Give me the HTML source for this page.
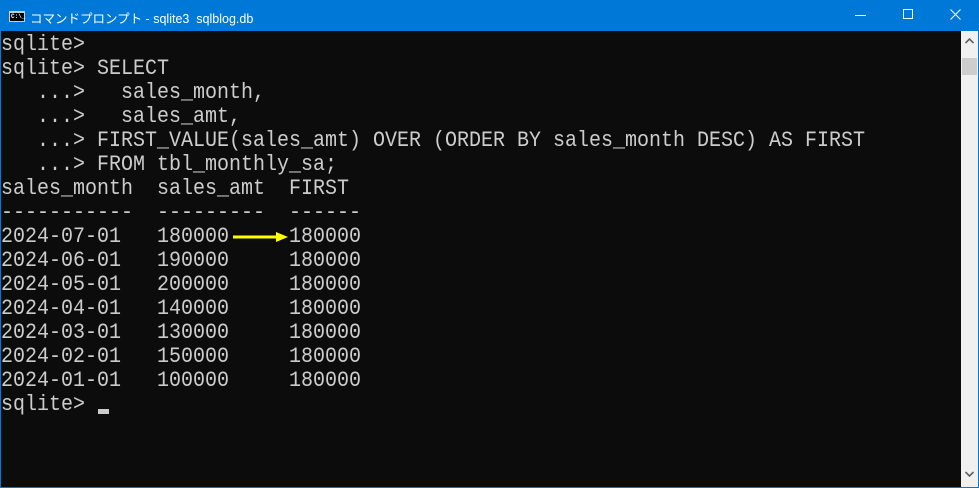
<!DOCTYPE html>
<html><head><meta charset="utf-8"><style>
*{margin:0;padding:0;box-sizing:border-box}
body{width:979px;height:488px;background:#0078d7;position:relative;overflow:hidden;font-family:"Liberation Sans","Noto Sans CJK JP",sans-serif}
#title{position:absolute;left:0;top:0;width:979px;height:31px;background:#0078d7;color:#fff;font-size:12.5px}
#title .t{position:absolute;left:30px;top:8px;white-space:pre}
#icon{position:absolute;left:9px;top:11px;width:16px;height:11px;background:#000;border:1px solid #ccc;border-top-width:2px}
#icon span{position:absolute;left:1px;top:0px;font:bold 6px "Liberation Mono",monospace;color:#fff}
#con{position:absolute;left:1px;top:31px;width:960px;height:456px;background:#0c0c0c}
#sb{position:absolute;left:961px;top:31px;width:17px;height:456px;background:#f0f0f0}
#thumb{position:absolute;left:1px;top:27px;width:15px;height:17px;background:#cdcdcd}
pre{position:absolute;left:1px;top:33px;font:22px/24px "Liberation Mono",monospace;color:#cccccc;transform:scaleX(0.909);transform-origin:0 0}
#cur{position:absolute;left:98px;top:409px;width:11px;height:5px;background:#ccc}
</style></head><body>
<div id="title"><div id="icon"><span>C:\_</span></div><div class="t">コマンドプロンプト - sqlite3  sqlblog.db</div>
<svg style="position:absolute;left:855px;top:8px" width="16" height="16"><path d="M0 7.5H11" stroke="#fff"/></svg>
<svg style="position:absolute;left:903px;top:9px" width="12" height="12"><rect x="0.5" y="0.5" width="9" height="9" fill="none" stroke="#fff"/></svg>
<svg style="position:absolute;left:950px;top:9px" width="12" height="12"><path d="M0.5 0.5L10.5 10.5M10.5 0.5L0.5 10.5" stroke="#fff"/></svg>
</div>
<div id="con"></div>
<div id="sb"><div id="thumb"></div>
<svg style="position:absolute;left:4px;top:7px" width="9" height="6"><path d="M0.5 5L4.5 1L8.5 5" stroke="#606060" stroke-width="1.6" fill="none"/></svg>
<svg style="position:absolute;left:4px;top:440px" width="9" height="6"><path d="M0.5 1L4.5 5L8.5 1" stroke="#606060" stroke-width="1.6" fill="none"/></svg>
</div>
<pre>sqlite>
sqlite> SELECT
   ...>   sales_month,
   ...>   sales_amt,
   ...> FIRST_VALUE(sales_amt) OVER (ORDER BY sales_month DESC) AS FIRST
   ...> FROM tbl_monthly_sa;
sales_month  sales_amt  FIRST
-----------  ---------  ------
2024-07-01   180000     180000
2024-06-01   190000     180000
2024-05-01   200000     180000
2024-04-01   140000     180000
2024-03-01   130000     180000
2024-02-01   150000     180000
2024-01-01   100000     180000
sqlite> </pre>
<svg style="position:absolute;left:230px;top:229px" width="62" height="16"><path d="M3 8H48" stroke="#ffff00" stroke-width="3"/><path d="M46 3L58 8L46 13Z" fill="#ffff00"/></svg>
<div id="cur"></div>
</body></html>
